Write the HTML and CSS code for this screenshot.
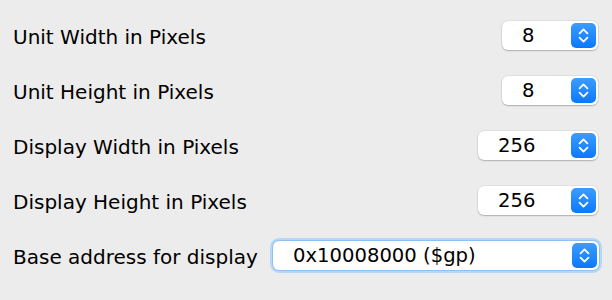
FILE: index.html
```html
<html lang="en">
<head>
    <meta charset="UTF-8">
    <title>Bitmap Display Settings</title>
    <link rel="stylesheet" href="styles.css">
</head>
<body>
    <main class="settings">
        <div class="row">
            <span class="label">Unit Width in Pixels</span>
            <div class="combo small"><span class="value">8</span><span class="stepper"><svg viewBox="0 0 24 24"><path d="M7.5 9.5 12 5l4.5 4.5M7.5 14.5 12 19l4.5-4.5"/></svg></span></div>
        </div>
        <div class="row">
            <span class="label">Unit Height in Pixels</span>
            <div class="combo small"><span class="value">8</span><span class="stepper"><svg viewBox="0 0 24 24"><path d="M7.5 9.5 12 5l4.5 4.5M7.5 14.5 12 19l4.5-4.5"/></svg></span></div>
        </div>
        <div class="row">
            <span class="label">Display Width in Pixels</span>
            <div class="combo medium"><span class="value">256</span><span class="stepper"><svg viewBox="0 0 24 24"><path d="M7.5 9.5 12 5l4.5 4.5M7.5 14.5 12 19l4.5-4.5"/></svg></span></div>
        </div>
        <div class="row">
            <span class="label">Display Height in Pixels</span>
            <div class="combo medium"><span class="value">256</span><span class="stepper"><svg viewBox="0 0 24 24"><path d="M7.5 9.5 12 5l4.5 4.5M7.5 14.5 12 19l4.5-4.5"/></svg></span></div>
        </div>
        <div class="row">
            <span class="label">Base address for display</span>
            <div class="combo wide focused"><span class="value">0x10008000 ($gp)</span><span class="stepper"><svg viewBox="0 0 24 24"><path d="M7.5 9.5 12 5l4.5 4.5M7.5 14.5 12 19l4.5-4.5"/></svg></span></div>
        </div>
    </main>
</body>
</html>
```

FILE: styles.css
```css
*{
    box-sizing: border-box;
}
body{
    margin: 0;
    background-color: #ececec;
    color: #000;
    font-family: "DejaVu Sans", "Liberation Sans", sans-serif;
}
.settings{
    display: flex;
    flex-direction: column;
    padding: 8px 14px 0 13px;
}
.row{
    height: 55px;
    display: flex;
    align-items: center;
    justify-content: space-between;
}
.label{
    font-size: 20px;
    padding-top: 3px;
}
.combo{
    height: 29px;
    display: flex;
    align-items: center;
    justify-content: space-between;
    background-color: #fff;
    border-radius: 6px;
    box-shadow: 0 0 0 0.5px rgba(0,0,0,.1), 0 1px 1.5px rgba(0,0,0,.22);
    padding: 0 2px 0 20px;
    font-size: 19.6px;
    &.small{
        width: 96px;
    }
    &.medium{
        width: 120px;
    }
    &.wide{
        width: 326px;
        margin-right: -1px;
    }
    &.focused{
        box-shadow: 0 0 0 1px #8fc0f3, 0 0 0 3px #b7d7f7;
    }
}
.stepper{
    width: 25px;
    height: 25px;
    border-radius: 5px;
    background: linear-gradient(#3d9cfd, #0a79fe);
    display: flex;
    align-items: center;
    justify-content: center;
    & svg{
        width: 21px;
        height: 21px;
        fill: none;
        stroke: #fff;
        stroke-width: 2.1;
        stroke-linecap: round;
        stroke-linejoin: round;
    }
}
```
